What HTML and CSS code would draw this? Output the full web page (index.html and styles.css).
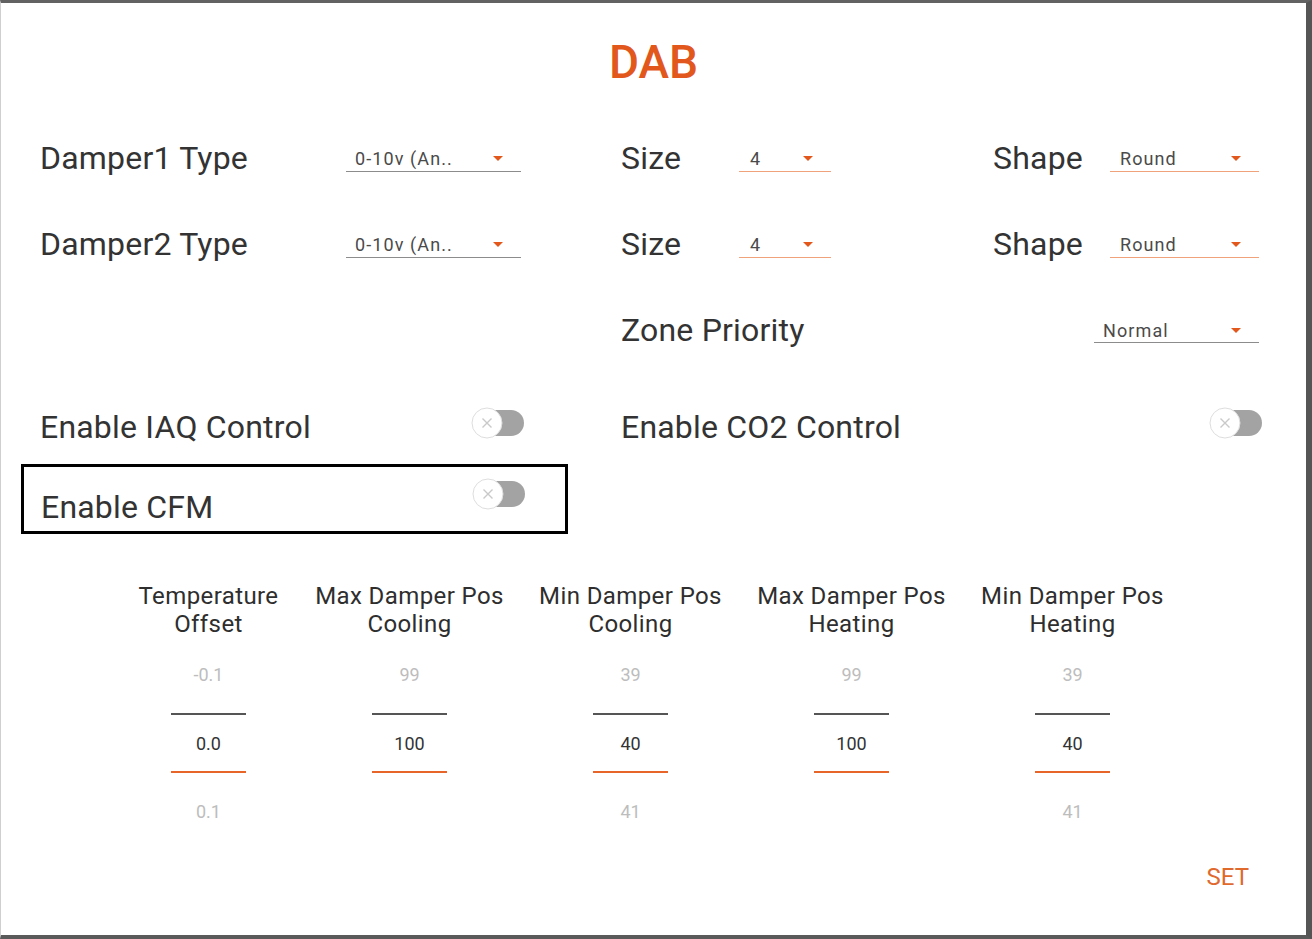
FILE: index.html
```html
<!DOCTYPE html>
<html lang="en">
<head>
    <meta charset="UTF-8">
    <meta name="viewport" content="width=device-width, initial-scale=1.0">
    <title>DAB</title>
    <link rel="stylesheet" href="styles.css">
</head>
<body>
    <div class="panel">
        <h1 class="title">DAB</h1>

        <div class="settings">
            <div class="label">Damper1 Type</div>
            <div class="dropdown gray"><span>0-10v (An..</span><i class="caret"></i></div>
            <div></div>
            <div class="label">Size</div>
            <div class="dropdown size"><span>4</span><i class="caret"></i></div>
            <div></div>
            <div class="label">Shape</div>
            <div class="dropdown"><span>Round</span><i class="caret"></i></div>

            <div class="label">Damper2 Type</div>
            <div class="dropdown gray"><span>0-10v (An..</span><i class="caret"></i></div>
            <div></div>
            <div class="label">Size</div>
            <div class="dropdown size"><span>4</span><i class="caret"></i></div>
            <div></div>
            <div class="label">Shape</div>
            <div class="dropdown"><span>Round</span><i class="caret"></i></div>

            <div class="zone">
                <div class="label">Zone Priority</div>
                <div class="dropdown gray wide"><span>Normal</span><i class="caret"></i></div>
            </div>
        </div>

        <div class="toggles">
            <div class="toggle-row">
                <div class="label">Enable IAQ Control</div>
                <svg class="switch" width="54" height="32" viewBox="0 0 54 32">
                    <rect x="12" y="3" width="41" height="26" rx="13" fill="#a3a3a3"/>
                    <circle cx="16" cy="16" r="15" fill="#fff" stroke="#dedede"/>
                    <path d="M11.5 11.5 L20.5 20.5 M20.5 11.5 L11.5 20.5" stroke="#c9c9c9" stroke-width="1.4"/>
                </svg>
            </div>
            <div class="toggle-row">
                <div class="label">Enable CO2 Control</div>
                <svg class="switch" width="54" height="32" viewBox="0 0 54 32">
                    <rect x="12" y="3" width="41" height="26" rx="13" fill="#a3a3a3"/>
                    <circle cx="16" cy="16" r="15" fill="#fff" stroke="#dedede"/>
                    <path d="M11.5 11.5 L20.5 20.5 M20.5 11.5 L11.5 20.5" stroke="#c9c9c9" stroke-width="1.4"/>
                </svg>
            </div>
        </div>

        <div class="cfm-box">
            <div class="label">Enable CFM</div>
            <svg class="switch" width="54" height="32" viewBox="0 0 54 32">
                <rect x="12" y="3" width="41" height="26" rx="13" fill="#a3a3a3"/>
                <circle cx="16" cy="16" r="15" fill="#fff" stroke="#dedede"/>
                <path d="M11.5 11.5 L20.5 20.5 M20.5 11.5 L11.5 20.5" stroke="#c9c9c9" stroke-width="1.4"/>
            </svg>
        </div>

        <div class="pickers">
            <div class="picker">
                <div class="picker-title">Temperature<br>Offset</div>
                <div class="val dim">-0.1</div>
                <div class="line"></div>
                <div class="val current">0.0</div>
                <div class="line active"></div>
                <div class="val dim">0.1</div>
            </div>
            <div class="picker">
                <div class="picker-title">Max Damper Pos<br>Cooling</div>
                <div class="val dim">99</div>
                <div class="line"></div>
                <div class="val current">100</div>
                <div class="line active"></div>
                <div class="val dim"></div>
            </div>
            <div class="picker">
                <div class="picker-title">Min Damper Pos<br>Cooling</div>
                <div class="val dim">39</div>
                <div class="line"></div>
                <div class="val current">40</div>
                <div class="line active"></div>
                <div class="val dim">41</div>
            </div>
            <div class="picker">
                <div class="picker-title">Max Damper Pos<br>Heating</div>
                <div class="val dim">99</div>
                <div class="line"></div>
                <div class="val current">100</div>
                <div class="line active"></div>
                <div class="val dim"></div>
            </div>
            <div class="picker">
                <div class="picker-title">Min Damper Pos<br>Heating</div>
                <div class="val dim">39</div>
                <div class="line"></div>
                <div class="val current">40</div>
                <div class="line active"></div>
                <div class="val dim">41</div>
            </div>
        </div>

        <div class="actions">
            <button type="button" class="btn-set">SET</button>
        </div>
    </div>
</body>
</html>
```

FILE: styles.css
```css
body {
    margin: 0;
    font-family: Roboto, "Liberation Sans", sans-serif;
    background: #fff;
    color: #333;
}
.panel {
    box-sizing: border-box;
    width: 1312px;
    height: 939px;
    border-top: 3px solid #626262;
    border-right: 6px solid #555;
    border-bottom: 4px solid #5a5a5a;
    border-left: 1px solid #cfcfcf;
    padding: 0 0 0 39px;
}
.title {
    margin: 0;
    padding-top: 31px;
    height: 56px;
    line-height: 56px;
    font-size: 46px;
    font-weight: 500;
    color: #e2571c;
    text-align: center;
    margin-left: -39px;
}
.label {
    font-size: 32px;
    line-height: 38px;
    letter-spacing: 0.2px;
    color: #333;
    white-space: nowrap;
}
.settings {
    margin-top: 25px;
    display: grid;
    grid-template-columns: 306px 175px 100px 118px 92px 162px 117px 149px;
    grid-auto-rows: 86px;
    align-items: center;
}
.dropdown {
    display: flex;
    justify-content: space-between;
    align-items: center;
    height: 24px;
    margin-top: 2px;
    padding: 0 18px 0 10px;
    border-bottom: 1.5px solid #f0a27a;
    font-size: 18px;
    letter-spacing: 1.1px;
    color: #4a4a4a;
}
.dropdown.gray {
    border-bottom-color: #8c8c8c;
    padding-left: 9px;
}
.dropdown.size {
    padding-left: 11px;
}
.dropdown.wide {
    width: 165px;
    box-sizing: border-box;
}
.caret {
    width: 0;
    height: 0;
    border-left: 5px solid transparent;
    border-right: 5px solid transparent;
    border-top: 5px solid #e2571c;
}
.zone {
    grid-column: 4 / 9;
    display: flex;
    justify-content: space-between;
    align-items: center;
}
.toggles {
    margin-top: 35px;
    display: grid;
    grid-template-columns: 485px 642px;
    column-gap: 96px;
    height: 56px;
}
.toggle-row {
    display: flex;
    justify-content: space-between;
    align-items: flex-start;
}
.switch {
    margin-top: -1px;
}
.cfm-box {
    box-sizing: border-box;
    width: 547px;
    height: 70px;
    margin-left: -19px;
    border: 3px solid #000;
    padding: 12px 39px 0 17px;
    display: flex;
    justify-content: space-between;
    align-items: flex-start;
}
.cfm-box .label {
    margin-top: 9px;
}
.cfm-box .switch {
    margin-top: -1px;
}
.pickers {
    margin-top: 48px;
    margin-left: 78px;
    display: grid;
    grid-template-columns: 181px 221px 221px 221px 221px;
}
.picker {
    display: flex;
    flex-direction: column;
    align-items: center;
}
.picker-title {
    font-size: 24px;
    line-height: 28px;
    letter-spacing: 0.4px;
    text-align: center;
    color: #2e2e2e;
    white-space: nowrap;
}
.val {
    height: 40px;
    line-height: 40px;
    font-size: 18px;
}
.val.dim {
    color: #bdbdbd;
    margin-top: 17px;
}
.val.dim:last-child {
    margin-top: 19px;
}
.val.current {
    color: #333;
    margin-top: 9px;
}
.line {
    width: 75px;
    height: 2px;
    margin-top: 18px;
    background: #555;
}
.line.active {
    margin-top: 7px;
    background: #e8652a;
}
.actions {
    display: flex;
    justify-content: flex-end;
    margin-top: 30px;
    padding-right: 57px;
}
.btn-set {
    background: none;
    border: none;
    padding: 0;
    font-family: Roboto, "Liberation Sans", sans-serif;
    font-size: 24px;
    line-height: 30px;
    color: #e0692e;
    cursor: pointer;
}
```
